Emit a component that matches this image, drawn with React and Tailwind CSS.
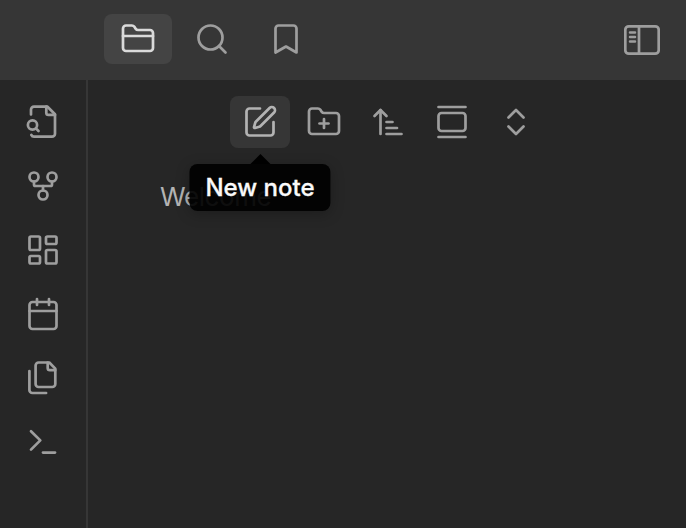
import React from "react";
import {
  ArrowUpNarrowWide, Bookmark, Calendar, ChevronsUpDown, FolderClosed, FolderPlus,
  GalleryVertical, GitFork, LayoutDashboard, Search, SquarePen,
} from "lucide-react";

const ICON = { size: 36, strokeWidth: 1.8 };

function Glyph({ children }) {
  return (
    <svg width="36" height="36" viewBox="0 0 36 36" fill="none" stroke="currentColor"
      strokeWidth="2.7" strokeLinecap="round" strokeLinejoin="round">
      {children}
    </svg>
  );
}

const QuickSwitcherIcon = () => (
  <Glyph>
    <path d="M6 10.5V5.7a3 3 0 0 1 3-3h13.5L30 10.2v19.5a3 3 0 0 1-3 3H9a3 3 0 0 1-2.7-1.8" />
    <path d="M21.3 2.7v6a2.2 2.2 0 0 0 2.2 2.2H30" />
    <circle cx="7.5" cy="21" r="4.6" />
    <path d="m10.9 24.4 2.6 2.6" />
  </Glyph>
);

const TemplatesIcon = () => (
  <Glyph>
    <path d="M24.3 2.5H13.6a3 3 0 0 0-3 3V24a3 3 0 0 0 3 3h13.7a3 3 0 0 0 3-3V8.6z" />
    <path d="M22.7 2.7v5.3a2.2 2.2 0 0 0 2.2 2.2h5.3" />
    <path d="M4.4 11v19a3 3 0 0 0 3 3h13.7" />
  </Glyph>
);

const TerminalIcon = () => (
  <Glyph>
    <path d="m6 7.3 9.3 9.1L6 25.6" />
    <path d="M18 28.6h12" />
  </Glyph>
);

const SidebarToggleIcon = () => (
  <Glyph>
    <rect x="1.3" y="4.3" width="33.4" height="27.4" rx="3.5" />
    <path d="M15 4.3v27.4" />
    <path d="M6 10.4h5M6 15h5M6 19.6h5" strokeWidth="2.5" />
  </Glyph>
);

const tabs = [
  { id: "files", icon: FolderClosed, active: true },
  { id: "search", icon: Search },
  { id: "bookmarks", icon: Bookmark },
];

const ribbon = [
  { id: "switcher", icon: QuickSwitcherIcon },
  { id: "graph", icon: GitFork },
  { id: "canvas", icon: LayoutDashboard },
  { id: "daily", icon: Calendar },
  { id: "templates", icon: TemplatesIcon },
  { id: "commands", icon: TerminalIcon },
];

const actions = [
  { id: "new", icon: SquarePen, tooltip: "New note" },
  { id: "folder", icon: FolderPlus },
  { id: "sort", icon: ArrowUpNarrowWide },
  { id: "reveal", icon: GalleryVertical },
  { id: "expand", icon: ChevronsUpDown },
];

function Tooltip({ label }) {
  return (
    <div className="absolute left-1/2 top-[68px] z-10 -translate-x-1/2 rounded-lg bg-black/92 px-4 h-[47px] flex items-center shadow-[0_3px_14px_rgba(0,0,0,0.25)]">
      <div className="absolute left-1/2 -top-[10px] -translate-x-1/2 border-x-[10px] border-b-[10px] border-x-transparent border-b-black" />
      <span className="whitespace-nowrap text-[24px] font-medium leading-none text-[#fafafa] [-webkit-text-stroke:0.3px_#fafafa]">{label}</span>
    </div>
  );
}

export default function App() {
  return (
    <div className="flex h-screen w-full flex-col overflow-hidden bg-[#262626] font-['Inter',sans-serif] text-[#9e9e9e]">
      <header className="flex h-20 shrink-0 items-start justify-between bg-[#363636] pl-[104px] pr-[26px] pt-3.5">
        <div className="flex gap-1.5">
          {tabs.map(({ id, icon: Icon, active }) => (
            <button key={id}
              className={`flex h-[50px] w-[68px] items-center justify-center rounded-lg ${active ? "bg-[#444444] text-[#dadada]" : ""}`}>
              <Icon {...ICON} />
            </button>
          ))}
        </div>
        <button className="mt-2"><SidebarToggleIcon /></button>
      </header>

      <div className="flex min-h-0 flex-1">
        <nav className="flex w-[88px] shrink-0 flex-col items-center gap-7 border-r-2 border-[#363636] pt-6">
          {ribbon.map(({ id, icon: Icon }) => (
            <button key={id}><Icon {...ICON} /></button>
          ))}
        </nav>

        <main className="flex-1 pt-4">
          <div className="flex gap-1 pl-[142px]">
            {actions.map(({ id, icon: Icon, tooltip }) => (
              <button key={id}
                className={`relative flex h-[52px] w-[60px] items-center justify-center rounded-lg ${tooltip ? "bg-[#363636] text-[#b3b3b3]" : ""}`}>
                <Icon {...ICON} />
                {tooltip && <Tooltip label={tooltip} />}
              </button>
            ))}
          </div>
          <div className="pl-[72px] pt-8 text-[26px] leading-[34px] tracking-[-0.4px] text-[#b3b3b3]">Welcome</div>
        </main>
      </div>
    </div>
  );
}
